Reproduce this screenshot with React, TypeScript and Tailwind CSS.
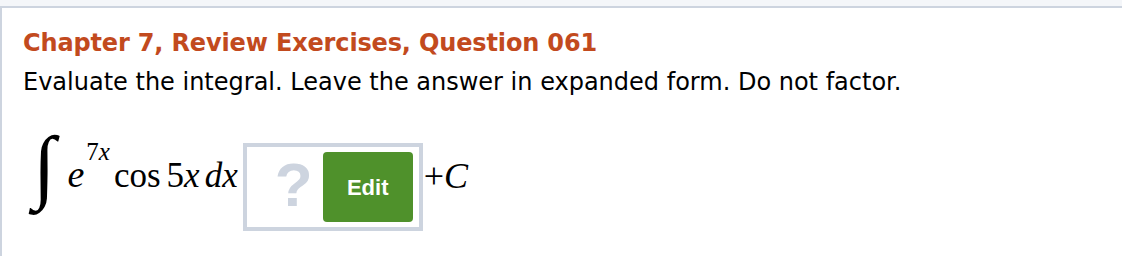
export default function App() {
  return (
    <div className="w-[1122px] h-[256px] bg-white overflow-hidden">
      {/* top strip */}
      <div className="h-[6px] bg-[#f4f6f9]" />
      <div className="h-[250px] border-t-2 border-l-2 border-[#cdd4df] pl-[21px] pt-[21px]">
        <h2
          className="text-[24px] leading-[28px] font-bold text-[#c24a1e] tracking-[-0.15px]"
          style={{ fontFamily: '"DejaVu Sans", Verdana, sans-serif' }}
        >
          Chapter 7, Review Exercises, Question 061
        </h2>
        <p
          className="mt-[11px] text-[24px] leading-[28px] text-black"
          style={{ fontFamily: '"DejaVu Sans", Verdana, sans-serif' }}
        >
          Evaluate the integral. Leave the answer in expanded form. Do not factor.
        </p>

        {/* math row */}
        <div
          className="mt-[30px] flex items-start text-black"
          style={{ fontFamily: '"Liberation Serif", "Times New Roman", serif' }}
        >
          <span className="ml-[10px] text-[82px] leading-[80px] italic">∫</span>
          <span className="ml-[12px] mt-[28px] text-[35px] leading-[40px] whitespace-nowrap">
            <i className="text-[38px]">e</i>
            <sup className="ml-[2px] text-[25px] leading-none -top-[27px]">
              7<i>x</i>
            </sup>
            <span className="ml-[4px]">cos</span>
            <span className="ml-[6px]">5</span>
            <i>x</i>
            <i className="ml-[5px]">dx</i>
          </span>

          {/* answer box */}
          <div className="ml-[5px] mt-[17px] w-[180px] h-[88px] border-4 border-[#cdd4df] bg-white flex items-center pr-[6px]">
            <span
              className="ml-[28px] mt-[-4px] text-[62px] leading-none font-bold text-[#cdd4df]"
              style={{ fontFamily: '"Liberation Sans", Arial, sans-serif' }}
            >
              ?
            </span>
            <button
              className="ml-auto w-[90px] h-[70px] rounded-[4px] bg-[#4f912b] text-white text-[22px] font-bold"
              style={{ fontFamily: '"Liberation Sans", Arial, sans-serif' }}
            >
              Edit
            </button>
          </div>

          <span className="ml-[1px] mt-[30px] text-[36px] leading-[40px] whitespace-nowrap">
            +<i>C</i>
          </span>
        </div>
      </div>
    </div>
  );
}
